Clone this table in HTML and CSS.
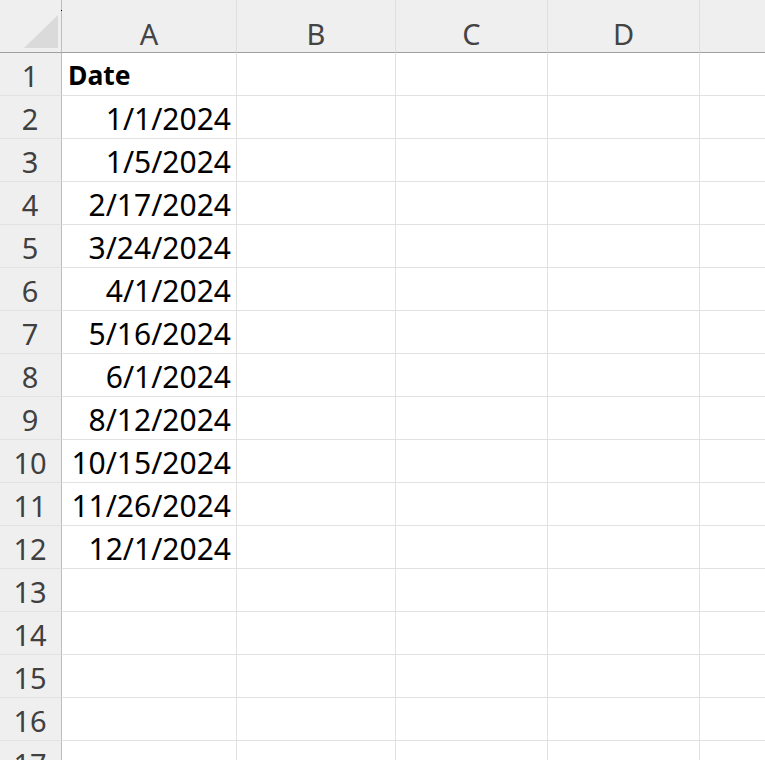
FILE: index.html
```html
<!DOCTYPE html>
<html>
<head>
<meta charset="utf-8">
<link rel="stylesheet" href="styles.css">
</head>
<body>
<div class="sheet">
  <div class="corner"><span class="dot"></span><div class="tri"></div></div>
  <div class="colhead">A</div>
  <div class="colhead">B</div>
  <div class="colhead">C</div>
  <div class="colhead">D</div>
  <div class="colhead last"></div>

  <div class="rowhead">1</div><div class="cell bold">Date</div><div class="cell"></div><div class="cell"></div><div class="cell"></div><div class="cell last"></div>
  <div class="rowhead">2</div><div class="cell num">1/1/2024</div><div class="cell"></div><div class="cell"></div><div class="cell"></div><div class="cell last"></div>
  <div class="rowhead">3</div><div class="cell num">1/5/2024</div><div class="cell"></div><div class="cell"></div><div class="cell"></div><div class="cell last"></div>
  <div class="rowhead">4</div><div class="cell num">2/17/2024</div><div class="cell"></div><div class="cell"></div><div class="cell"></div><div class="cell last"></div>
  <div class="rowhead">5</div><div class="cell num">3/24/2024</div><div class="cell"></div><div class="cell"></div><div class="cell"></div><div class="cell last"></div>
  <div class="rowhead">6</div><div class="cell num">4/1/2024</div><div class="cell"></div><div class="cell"></div><div class="cell"></div><div class="cell last"></div>
  <div class="rowhead">7</div><div class="cell num">5/16/2024</div><div class="cell"></div><div class="cell"></div><div class="cell"></div><div class="cell last"></div>
  <div class="rowhead">8</div><div class="cell num">6/1/2024</div><div class="cell"></div><div class="cell"></div><div class="cell"></div><div class="cell last"></div>
  <div class="rowhead">9</div><div class="cell num">8/12/2024</div><div class="cell"></div><div class="cell"></div><div class="cell"></div><div class="cell last"></div>
  <div class="rowhead">10</div><div class="cell num">10/15/2024</div><div class="cell"></div><div class="cell"></div><div class="cell"></div><div class="cell last"></div>
  <div class="rowhead">11</div><div class="cell num">11/26/2024</div><div class="cell"></div><div class="cell"></div><div class="cell"></div><div class="cell last"></div>
  <div class="rowhead">12</div><div class="cell num">12/1/2024</div><div class="cell"></div><div class="cell"></div><div class="cell"></div><div class="cell last"></div>
  <div class="rowhead">13</div><div class="cell"></div><div class="cell"></div><div class="cell"></div><div class="cell"></div><div class="cell last"></div>
  <div class="rowhead">14</div><div class="cell"></div><div class="cell"></div><div class="cell"></div><div class="cell"></div><div class="cell last"></div>
  <div class="rowhead">15</div><div class="cell"></div><div class="cell"></div><div class="cell"></div><div class="cell"></div><div class="cell last"></div>
  <div class="rowhead">16</div><div class="cell"></div><div class="cell"></div><div class="cell"></div><div class="cell"></div><div class="cell last"></div>
  <div class="rowhead">17</div><div class="cell"></div><div class="cell"></div><div class="cell"></div><div class="cell"></div><div class="cell last"></div>
</div>
</body>
</html>
```
FILE: styles.css
```css
html, body {
  margin: 0;
  padding: 0;
  background: #ffffff;
  overflow: hidden;
}
.sheet {
  display: grid;
  grid-template-columns: 62px 175px 159px 152px 152px 65px;
  grid-template-rows: 53px repeat(17, 43px);
  width: 765px;
  font-family: "Noto Sans", "Open Sans", sans-serif;
  font-size: 29px;
}
.corner {
  position: relative;
  background: #efefef;
  border-right: 1px solid #bdbdbd;
  border-bottom: 1px solid #a0a0a0;
  box-sizing: border-box;
}
.tri {
  position: absolute;
  left: 24px;
  top: 15px;
  width: 34px;
  height: 33px;
  background: #dadada;
  clip-path: polygon(100% 0, 100% 100%, 0 100%);
}
.dot {
  position: absolute;
  left: 61px;
  top: 10px;
  width: 1px;
  height: 1px;
  background: #000;
}
.colhead {
  background: #efefef;
  color: #444444;
  box-sizing: border-box;
  border-bottom: 1px solid #a0a0a0;
  border-right: 1px solid #dedede;
  display: flex;
  align-items: center;
  justify-content: center;
  padding-top: 14px;
  line-height: 1;
}
.colhead.last {
  border-right: none;
}
.rowhead {
  background: #efefef;
  color: #404040;
  box-sizing: border-box;
  border-right: 1px solid #bdbdbd;
  border-bottom: 1px solid #e2e2e2;
  display: flex;
  align-items: center;
  justify-content: center;
  padding-right: 1px;
  padding-top: 3px;
  line-height: 1;
}
.cell {
  box-sizing: border-box;
  border-right: 1px solid #e1e1e1;
  border-bottom: 1px solid #e1e1e1;
  display: flex;
  align-items: center;
  padding: 3px 5px 0 6px;
  color: #000000;
  line-height: 1;
  white-space: nowrap;
  font-size: 30px;
}
.cell.last {
  border-right: none;
}
.num {
  justify-content: flex-end;
}
.bold {
  font-weight: 700;
  font-size: 26.5px;
}
```
